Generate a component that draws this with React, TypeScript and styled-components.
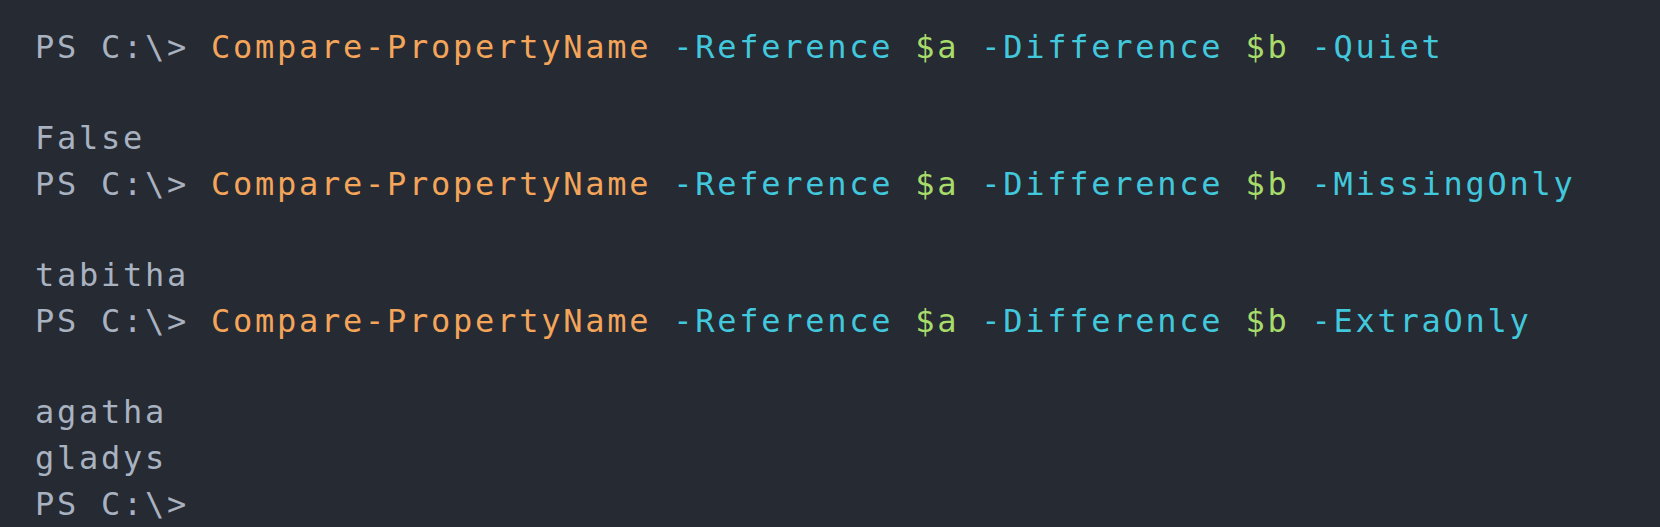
import React from "react";
import styled, { createGlobalStyle } from "styled-components";

const GlobalStyle = createGlobalStyle`
  html, body {
    margin: 0;
    padding: 0;
    background: #262a33;
  }
  body {
    width: 1660px;
    height: 527px;
    overflow: hidden;
  }
`;

type Tone = "plain" | "cmd" | "param" | "var";

const colors: Record<Tone, string> = {
  plain: "#a9b2c0",
  cmd: "#f4a55a",
  param: "#42c8dc",
  var: "#a8dc6a",
};

const Terminal = styled.main`
  box-sizing: border-box;
  width: 1660px;
  height: 527px;
  background: #262a33;
  padding: 24px 0 0 35px;
  font-family: "DejaVu Sans Mono", "Liberation Mono", monospace;
  font-size: 32px;
  letter-spacing: 2.74px;
  line-height: 46px;
  color: #a9b2c0;
  display: flex;
  flex-direction: column;
`;

const Line = styled.div`
  height: 46px;
  white-space: pre;
`;

const Token = styled.span<{ $tone: Tone }>`
  color: ${(p) => colors[p.$tone]};
`;

type Seg = [Tone, string];

const command = (flag: string): Seg[] => [
  ["plain", "PS C:\\> "],
  ["cmd", "Compare-PropertyName"],
  ["plain", " "],
  ["param", "-Reference"],
  ["plain", " "],
  ["var", "$a"],
  ["plain", " "],
  ["param", "-Difference"],
  ["plain", " "],
  ["var", "$b"],
  ["plain", " "],
  ["param", flag],
];

const lines: Seg[][] = [
  command("-Quiet"),
  [],
  [["plain", "False"]],
  command("-MissingOnly"),
  [],
  [["plain", "tabitha"]],
  command("-ExtraOnly"),
  [],
  [["plain", "agatha"]],
  [["plain", "gladys"]],
  [["plain", "PS C:\\>"]],
];

export default function App() {
  return (
    <>
      <GlobalStyle />
      <Terminal>
        {lines.map((segs, i) => (
          <Line key={i}>
            {segs.map(([tone, text], j) => (
              <Token key={j} $tone={tone}>
                {text}
              </Token>
            ))}
          </Line>
        ))}
      </Terminal>
    </>
  );
}
